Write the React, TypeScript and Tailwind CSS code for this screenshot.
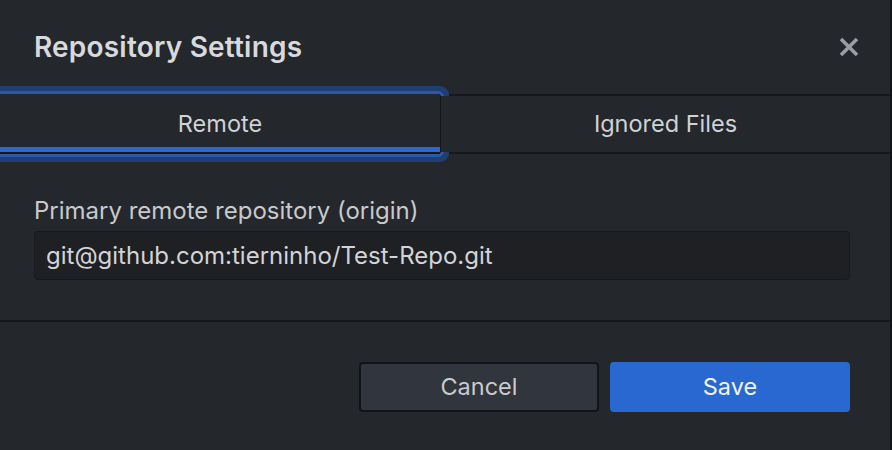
import React from 'react'

const font = { fontFamily: 'Inter, "Noto Sans", sans-serif' }

function CloseIcon() {
  return (
    <svg width="22" height="22" viewBox="0 0 22 22" className="text-[#9a9ea4]">
      <path d="M3 3 L19 19 M19 3 L3 19" stroke="currentColor" strokeWidth="3.6" strokeLinecap="butt" />
    </svg>
  )
}

export default function App() {
  return (
    <div
      style={font}
      className="flex h-[450px] w-[892px] flex-col overflow-hidden border-r-2 border-[#141518] bg-[#24272c] antialiased"
    >
      {/* header */}
      <div className="flex h-[94px] items-center justify-between pl-[34px] pr-[30px]">
        <h1 className="text-[28px] font-semibold tracking-[0.2px] text-[#d7d9dc]">Repository Settings</h1>
        <button className="flex items-center">
          <CloseIcon />
        </button>
      </div>

      {/* tabs */}
      <div className="flex h-[60px] border-y-2 border-[#17181b]">
        <div className="relative -my-[2px] flex w-[441px] items-center justify-center rounded-r-[3px] border-r border-[#141518] bg-[#24272c] shadow-[0_0_0_3px_#2b59a6,0_0_0_8px_#1f3e71]">
          <span className="pb-[1px] text-[23.5px] text-[#d0d2d5]">Remote</span>
          <div className="absolute inset-x-0 bottom-[2px] h-[5px] bg-[#2b68d1]" />
          <div className="absolute inset-x-0 bottom-0 h-[2px] bg-[#17181b]" />
        </div>
        <div className="relative flex flex-1 items-center justify-center bg-[#24272c]">
          <span className="pb-[1px] text-[23.5px] text-[#d0d2d5]">Ignored Files</span>
        </div>
      </div>

      {/* content */}
      <div className="flex h-[168px] flex-col border-b-2 border-[#17181b] px-[34px] pt-[43px]">
        <label className="text-[24px] leading-[28px] text-[#c8cacd]">Primary remote repository (origin)</label>
        <div className="mt-[6px] mr-[6px] flex h-[49px] items-center rounded-[4px] border border-[#17191c] bg-[#1e2024] px-[11px]">
          <span className="text-[24px] text-[#d2d4d7]">git@github.com:tierninho/Test-Repo.git</span>
        </div>
      </div>

      {/* footer */}
      <div className="flex flex-1 items-start justify-end gap-[11px] pr-[40px] pt-[40px]">
        <button className="flex h-[50px] w-[240px] items-center justify-center rounded-[4px] border-2 border-[#121316] bg-[#31353d] text-[23.5px] text-[#c9cbce]">
          Cancel
        </button>
        <button className="flex h-[50px] w-[240px] items-center justify-center rounded-[4px] bg-[#2a68d1] text-[23.5px] text-[#f0f3fa]">
          Save
        </button>
      </div>
    </div>
  )
}
